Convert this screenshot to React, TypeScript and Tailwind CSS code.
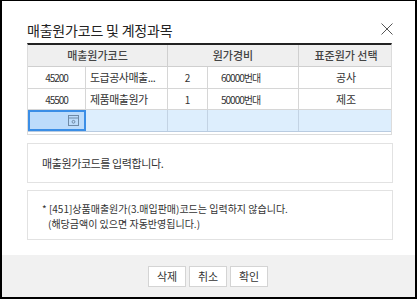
import React from 'react';

const FONT = { fontFamily: '"Noto Sans CJK KR", "Noto Sans", sans-serif' };

const rows = [
  { code: '45200', name: '도급공사매출...', no: '2', range: '60000번대', std: '공사' },
  { code: '45500', name: '제품매출원가', no: '1', range: '50000번대', std: '제조' },
];

const CodeIcon: React.FC = () => (
  <svg width="11" height="11" viewBox="0 0 11 11" fill="none">
    <rect x="0.5" y="0.5" width="10" height="10" stroke="#6f8aa6" />
    <line x1="0.5" y1="3" x2="10.5" y2="3" stroke="#6f8aa6" />
    <circle cx="5.5" cy="6.8" r="1.4" stroke="#6f8aa6" />
  </svg>
);

const App: React.FC = () => {
  return (
    <div
      className="w-[417px] h-[299px] bg-white border-black border-t border-l-2 border-r-2 border-b-2 flex flex-col text-[#333]"
      style={FONT}
    >
      {/* Title */}
      <div className="h-[42px] flex items-start justify-between pl-[25px] pr-[22px] pt-[19px]">
        <h1 className="text-[14px] leading-[20px] text-[#222] tracking-[-0.2px]">매출원가코드 및 계정과목</h1>
        <svg width="12" height="12" viewBox="0 0 12 12" className="mt-[3px]" stroke="#555" strokeWidth="1">
          <line x1="0.5" y1="0.5" x2="11.5" y2="11.5" />
          <line x1="11.5" y1="0.5" x2="0.5" y2="11.5" />
        </svg>
      </div>

      {/* Grid */}
      <div className="ml-[25px] w-[365px] h-[92px] border-t-2 border-t-[#222] border-x border-b border-[#dcdcdc] text-[11px]">
        <div className="grid grid-cols-[140px_131px_94px] h-[22px] bg-[#efefef] border-b border-[#cfcfcf] text-[#444] font-medium">
          <div className="flex items-center justify-center border-r border-[#cfcfcf]">매출원가코드</div>
          <div className="flex items-center justify-center border-r border-[#cfcfcf]">원가경비</div>
          <div className="flex items-center justify-center">표준원가 선택</div>
        </div>
        {rows.map((r, i) => (
          <div
            key={r.code}
            className={`grid grid-cols-[58px_82px_40px_91px_94px] border-b border-[#d6d6d6] ${i === 0 ? 'h-[22px]' : 'h-[21px]'}`}
          >
            <div className="flex items-center justify-center border-r border-[#d6d6d6] tracking-[-1px] text-[10px]">{r.code}</div>
            <div className="flex items-center pl-[4px] border-r border-[#d6d6d6] tracking-[-0.5px]">{r.name}</div>
            <div className="flex items-center justify-center border-r border-[#d6d6d6] text-[10px]">{r.no}</div>
            <div className="flex items-center pl-[13px] border-r border-[#d6d6d6] text-[10px] tracking-[-1px]">{r.range}</div>
            <div className="flex items-center justify-center">{r.std}</div>
          </div>
        ))}
        <div className="grid grid-cols-[58px_82px_40px_91px_94px] h-[22px] bg-[#ddeefd] border-b border-[#b9cbe0]">
          <div className="flex items-center justify-end pr-[5px] bg-[#bddcfb] border-2 border-[#3b8ee6]">
            <CodeIcon />
          </div>
          <div className="border-r border-[#c3d3e4]" />
          <div className="border-r border-[#c3d3e4]" />
          <div className="border-r border-[#c3d3e4]" />
          <div />
        </div>
      </div>

      {/* Message */}
      <div className="ml-[25px] w-[366px] h-[40px] mt-[8px] border border-[#e2e2e2] flex items-center pl-[14px] text-[11px] tracking-[-0.4px]">
        매출원가코드를 입력합니다.
      </div>

      {/* Notice */}
      <div className="ml-[25px] w-[366px] h-[50px] mt-[7px] border border-[#e2e2e2] pl-[14px] pt-[11px] text-[10px] leading-[14.5px]">
        <p>* [451]상품매출원가(3.매입판매)코드는 입력하지 않습니다.</p>
        <p className="pl-[6px]">(해당금액이 있으면 자동반영됩니다.)</p>
      </div>

      <div className="flex-1" />

      {/* Footer */}
      <div className="h-[42px] bg-[#f1f1f1] flex justify-center items-start pt-[11px] gap-[3px] pr-[1px]">
        {['삭제', '취소', '확인'].map((label) => (
          <button
            key={label}
            className="w-[38px] h-[21px] bg-white border border-[#d4d4d4] text-[11px] text-[#333] flex items-center justify-center"
          >
            {label}
          </button>
        ))}
      </div>
    </div>
  );
};

export default App;
